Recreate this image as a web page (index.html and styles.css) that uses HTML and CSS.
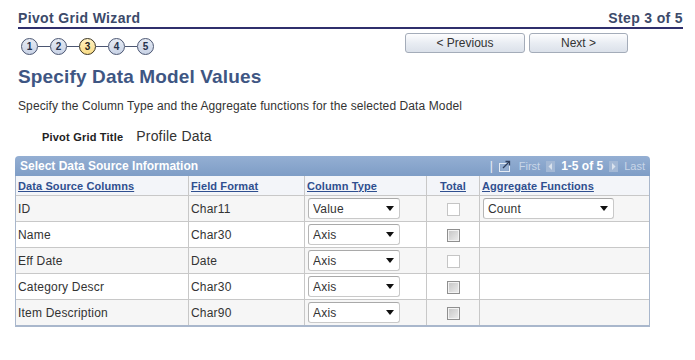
FILE: index.html
```html
<!DOCTYPE html>
<html lang="en">
<head>
    <meta charset="UTF-8">
    <title>Pivot Grid Wizard</title>
    <link rel="stylesheet" href="styles.css">
</head>
<body>
    <div class="page">
        <div class="wizard-head">
            <span>Pivot Grid Wizard</span>
            <span>Step 3 of 5</span>
        </div>

        <div class="wizard-nav">
            <div class="steps">
                <span class="step">1</span><span class="step-line"></span>
                <span class="step">2</span><span class="step-line"></span>
                <span class="step current">3</span><span class="step-line"></span>
                <span class="step">4</span><span class="step-line"></span>
                <span class="step">5</span>
            </div>
            <div class="nav-buttons">
                <button class="btn btn-prev">&lt; Previous</button>
                <button class="btn btn-next">Next &gt;</button>
            </div>
        </div>

        <h1 class="page-title">Specify Data Model Values</h1>
        <p class="page-desc">Specify the Column Type and the Aggregate functions for the selected Data Model</p>

        <div class="title-field">
            <span class="field-label">Pivot Grid Title</span>
            <span class="field-value">Profile Data</span>
        </div>

        <div class="grid">
            <div class="grid-bar">
                <span class="grid-title">Select Data Source Information</span>
                <div class="pager">
                    <span class="pager-sep">|</span>
                    <svg class="pager-zoom" width="14" height="12" viewBox="0 0 14 12">
                        <rect x="0.5" y="3.5" width="10" height="8" fill="none" stroke="#e4ebf4"/>
                        <rect x="1.5" y="4.5" width="8" height="6" fill="#93add0"/>
                        <path d="M4 8 L10 2" stroke="#2f3f5c" stroke-width="1.3"/>
                        <path d="M6.5 1.5 H10.5 V5.5" fill="none" stroke="#2f3f5c" stroke-width="1.3"/>
                    </svg>
                    <span class="pager-off">First</span>
                    <svg width="9" height="11" viewBox="0 0 9 11">
                        <rect width="9" height="11" fill="#a3b8d5"/>
                        <path d="M6 2 L2.5 5.5 L6 9 Z" fill="#d9e2ee"/>
                    </svg>
                    <span class="pager-count">1-5 of 5</span>
                    <svg width="9" height="11" viewBox="0 0 9 11">
                        <rect width="9" height="11" fill="#a3b8d5"/>
                        <path d="M3 2 L6.5 5.5 L3 9 Z" fill="#d9e2ee"/>
                    </svg>
                    <span class="pager-off">Last</span>
                </div>
            </div>

            <div class="grid-body">
                <table class="grid-table">
                    <colgroup>
                        <col class="c-name">
                        <col class="c-format">
                        <col class="c-type">
                        <col class="c-total">
                        <col class="c-agg">
                    </colgroup>
                    <thead>
                        <tr>
                            <th><a href="#">Data Source Columns</a></th>
                            <th><a href="#">Field Format</a></th>
                            <th><a href="#">Column Type</a></th>
                            <th class="center"><a href="#">Total</a></th>
                            <th><a href="#">Aggregate Functions</a></th>
                        </tr>
                    </thead>
                    <tbody>
                        <tr>
                            <td>ID</td>
                            <td>Char11</td>
                            <td>
                                <span class="select select-type">
                                    <select><option>Value</option></select>
                                    <svg class="select-arrow" width="8" height="5" viewBox="0 0 8 5"><path d="M0 0 H8 L4 5 Z" fill="#111"/></svg>
                                </span>
                            </td>
                            <td class="center"><span class="check disabled"></span></td>
                            <td>
                                <span class="select select-agg">
                                    <select><option>Count</option></select>
                                    <svg class="select-arrow" width="8" height="5" viewBox="0 0 8 5"><path d="M0 0 H8 L4 5 Z" fill="#111"/></svg>
                                </span>
                            </td>
                        </tr>
                        <tr>
                            <td>Name</td>
                            <td>Char30</td>
                            <td>
                                <span class="select select-type">
                                    <select><option>Axis</option></select>
                                    <svg class="select-arrow" width="8" height="5" viewBox="0 0 8 5"><path d="M0 0 H8 L4 5 Z" fill="#111"/></svg>
                                </span>
                            </td>
                            <td class="center"><span class="check"></span></td>
                            <td></td>
                        </tr>
                        <tr>
                            <td>Eff Date</td>
                            <td>Date</td>
                            <td>
                                <span class="select select-type">
                                    <select><option>Axis</option></select>
                                    <svg class="select-arrow" width="8" height="5" viewBox="0 0 8 5"><path d="M0 0 H8 L4 5 Z" fill="#111"/></svg>
                                </span>
                            </td>
                            <td class="center"><span class="check disabled"></span></td>
                            <td></td>
                        </tr>
                        <tr>
                            <td>Category Descr</td>
                            <td>Char30</td>
                            <td>
                                <span class="select select-type">
                                    <select><option>Axis</option></select>
                                    <svg class="select-arrow" width="8" height="5" viewBox="0 0 8 5"><path d="M0 0 H8 L4 5 Z" fill="#111"/></svg>
                                </span>
                            </td>
                            <td class="center"><span class="check"></span></td>
                            <td></td>
                        </tr>
                        <tr>
                            <td>Item Description</td>
                            <td>Char90</td>
                            <td>
                                <span class="select select-type">
                                    <select><option>Axis</option></select>
                                    <svg class="select-arrow" width="8" height="5" viewBox="0 0 8 5"><path d="M0 0 H8 L4 5 Z" fill="#111"/></svg>
                                </span>
                            </td>
                            <td class="center"><span class="check"></span></td>
                            <td></td>
                        </tr>
                    </tbody>
                </table>
            </div>
        </div>
    </div>
</body>
</html>
```

FILE: styles.css
```css
body {
    margin: 0;
    background-color: #fff;
    color: #333;
    font-family: "Liberation Sans", Arial, sans-serif;
}
.page {
    padding: 0 12px 0 18px;
}

/* wizard header */
.wizard-head {
    display: flex;
    justify-content: space-between;
    padding-top: 10px;
    line-height: 17px;
    font-size: 14px;
    font-weight: bold;
    letter-spacing: 0.35px;
    color: #3c4a6a;
    border-bottom: 2px solid #2f2f6c;
}
.wizard-nav {
    display: flex;
    justify-content: space-between;
    padding-right: 55px;
}
.steps {
    display: flex;
    align-items: center;
    margin-top: 9px;
    margin-left: 3px;
}
.step {
    display: flex;
    align-items: center;
    justify-content: center;
    width: 15px;
    height: 15px;
    border: 1px solid #4b5672;
    border-radius: 50%;
    background: linear-gradient(#e6ebf4, #c9d3e6);
    color: #26324c;
    font-size: 10px;
    font-weight: bold;
}
.step.current {
    border-color: #3a3320;
    background: linear-gradient(#fff1c2, #f9dc86);
    color: #222;
}
.step-line {
    width: 12px;
    height: 1px;
    background-color: #4b5672;
}
.nav-buttons {
    display: flex;
    gap: 4px;
    margin-top: 4px;
}
.btn {
    height: 20px;
    padding: 0;
    font-family: "Liberation Sans", Arial, sans-serif;
    font-size: 12px;
    color: #333;
    border: 1px solid #a4acb9;
    border-radius: 3px;
    background: linear-gradient(#fdfdfe, #e9edf3 50%, #dbe1ea);
}
.btn-prev {
    width: 120px;
}
.btn-next {
    width: 99px;
}

.page-title {
    margin: 10px 0 0;
    font-size: 19px;
    line-height: 23px;
    letter-spacing: 0.15px;
    color: #3e5683;
}
.page-desc {
    margin: 11px 0 0;
    font-size: 12px;
    line-height: 14px;
    letter-spacing: 0.1px;
}
.title-field {
    display: flex;
    align-items: baseline;
    gap: 13px;
    margin-top: 15px;
    padding-left: 24px;
    line-height: 17px;
}
.field-label {
    font-size: 11px;
    font-weight: bold;
    letter-spacing: 0.2px;
    color: #222;
}
.field-value {
    font-size: 14px;
    letter-spacing: 0.2px;
}

/* grid */
.grid {
    width: 635px;
    margin-top: 10px;
    margin-left: -3px;
}
.grid-bar {
    display: flex;
    justify-content: space-between;
    align-items: center;
    height: 20px;
    padding: 0 5px 0 5px;
    border-radius: 4px 4px 0 0;
    background: linear-gradient(#94afd3, #7e9dc6);
}
.grid-title {
    font-size: 12px;
    font-weight: bold;
    color: #fff;
}
.pager {
    display: flex;
    align-items: center;
    gap: 6px;
    font-size: 11px;
}
.pager-sep {
    font-size: 12px;
    color: #e8eef6;
}
.pager-off {
    color: #c9d6e8;
}
.pager-count {
    font-size: 12px;
    font-weight: bold;
    color: #fff;
}
.grid-body {
    border: 1px solid #a9b7cc;
    border-top: none;
    border-bottom-width: 2px;
}
.grid-table {
    width: 100%;
    table-layout: fixed;
    border-collapse: separate;
    border-spacing: 0;
    font-size: 12px;
    letter-spacing: 0.2px;
}
.c-name {
    width: 173px;
}
.c-format {
    width: 116px;
}
.c-type {
    width: 122px;
}
.c-total {
    width: 53px;
}
.grid-table th,
.grid-table td {
    padding: 0 0 0 2px;
    text-align: left;
    border-right: 1px solid #c8c8c8;
    white-space: nowrap;
}
.grid-table th:last-child,
.grid-table td:last-child {
    border-right: none;
}
.grid-table th {
    height: 19px;
    background-color: #f3f5f9;
    font-size: 11px;
    letter-spacing: 0.1px;
}
.grid-table th a {
    color: #2f4f8f;
}
.grid-table td {
    height: 25px;
    border-top: 1px solid #c8c8c8;
    vertical-align: middle;
}
.grid-table tbody tr:nth-child(odd) td {
    background-color: #f6f6f6;
}
.grid-table .center {
    padding: 0;
    text-align: center;
}

.select {
    position: relative;
    display: inline-block;
    vertical-align: middle;
    margin-left: 1px;
}
.select select {
    display: block;
    height: 21px;
    padding: 0 0 0 4px;
    font-family: "Liberation Sans", Arial, sans-serif;
    font-size: 12px;
    letter-spacing: 0.2px;
    color: #333;
    background-color: #fff;
    border: 1px solid #c9c9c9;
    border-top-color: #a9a9a9;
    border-left-color: #b5b5b5;
    border-radius: 3px;
    appearance: none;
    -webkit-appearance: none;
}
.select-type select {
    width: 92px;
}
.select-agg select {
    width: 131px;
}
.select-arrow {
    position: absolute;
    right: 6px;
    top: 8px;
    pointer-events: none;
}

.check {
    display: inline-block;
    vertical-align: middle;
    width: 13px;
    height: 13px;
    box-sizing: border-box;
    border: 1px solid #8f8f8f;
    box-shadow: inset 0 0 0 1px #f3f3f3;
    background: linear-gradient(135deg, #c4c4c4, #eeeeee);
}
.check.disabled {
    border-color: #c5c5c5;
    box-shadow: none;
    background: #fff;
}
```
